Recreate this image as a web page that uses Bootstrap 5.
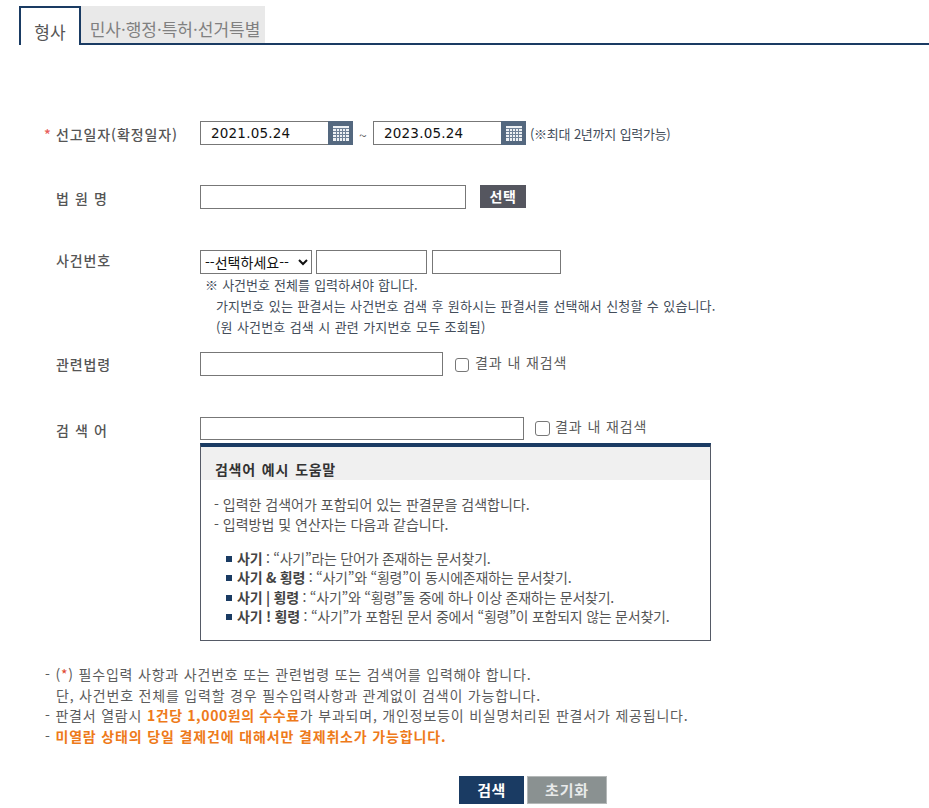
<!DOCTYPE html>
<html lang="ko">
<head>
<meta charset="utf-8">
<title>판결서 검색</title>
<link rel="stylesheet" href="https://cdn.jsdelivr.net/npm/bootstrap@5.3.0/dist/css/bootstrap.min.css">
<style>
html,body{height:808px;overflow:hidden}
body{font-family:"Noto Sans CJK KR","Liberation Sans",sans-serif;font-size:14px;color:#5c5c5c;background:#fff;line-height:20px}
.tabbar{margin-top:6px;padding-left:19px;height:39px;display:flex}
.tab-on{width:62px;height:39px;border:2px solid #1a3b63;border-bottom:0;background:#fff;font-size:17px;color:#555;padding-top:14px;text-align:center;line-height:20px}
.tab-off{width:184px;height:39px;background:#e9e9e9;border-bottom:2px solid #1a3b63;font-size:17px;color:#808080;text-align:center;padding:13px 0 0 4px;line-height:20px}
.tab-rest{flex:1;border-bottom:2px solid #1a3b63}
.form-zone{padding-left:44px}
.lbl{width:156px;flex:none;font-size:14px;font-weight:500;color:#555;padding-left:12px;position:relative;letter-spacing:.9px}
.lbl-top{padding-top:3px}
.lbl-sp{letter-spacing:1.6px;word-spacing:-1px}
.req{position:absolute;left:0;top:3px;color:#e8605a}
.fld{border:1px solid #777;background:#fff;height:24px;padding:0 10px;font-size:13.5px;color:#111;font-family:"DejaVu Sans",sans-serif;line-height:22px;letter-spacing:.2px}
.datebox{display:flex;height:24px}
.datebox .fld{width:128px;border-right:0}
.calbtn{width:25px;height:24px;background:#54687f;display:flex;align-items:center;justify-content:center}
.gbtn{width:46px;height:23px;margin-left:14px;background:#55565f;color:#fff;font-weight:700;font-size:14px;text-align:center;line-height:23px;letter-spacing:.6px}
.casesel{width:112px;height:24px;border:1px solid #777;background:#fff;font-size:14px;color:#111;padding:0;font-family:"Noto Sans CJK KR",sans-serif}
.hint{color:#434d5a;font-size:13px;word-spacing:.5px}
.hint-w{letter-spacing:.16px}
.hint-n{letter-spacing:-.3px;padding-top:3px}
.cbx{width:14px;height:14px;border:1px solid #777;border-radius:3px;background:#fff;flex:none;display:inline-block}
.cbx-lg{width:15px;height:15px}
.chk-txt{letter-spacing:.9px;margin-bottom:2px}
.help{width:511px;height:198px;border:1px solid #555a66;border-top:4px solid #1a3b63}
.help-h{height:33px;background:#f0f0f0;font-weight:700;font-size:14px;color:#333;padding:12px 0 0 14px;line-height:20px;letter-spacing:.7px;word-spacing:1.5px}
.help-b{padding:14px 13px;font-size:14px;line-height:20px;color:#555}
.gap-line{margin-top:15px}
.bl{padding-left:11px;position:relative;margin-left:12px;line-height:19.3px;letter-spacing:-.24px}
.bl::before{content:"";position:absolute;left:0;top:7px;width:6px;height:6px;background:#1a3b63}
.bl b{color:#444}
.notes{margin-top:23px;padding-left:45px;font-size:14px;line-height:20.5px;color:#5c5c5c;letter-spacing:.8px}
.indent{padding-left:11px}
.o1{color:#ee7a1a;font-weight:700;letter-spacing:.85px}
.o1-t{letter-spacing:.6px}
.o2{color:#e0452c}
.btn-go,.btn-reset{display:flex;align-items:center;justify-content:center;color:#fff;font-weight:700;font-size:15px;height:28px;letter-spacing:.5px}
.btn-go{width:65px;background:#1a3b63;margin-right:3px}
.btn-reset{width:80px;background:#8a9191;border:1px solid #b4b8b8;color:#e8eaea;letter-spacing:.9px}
</style>
</head>
<body>
<div class="tabbar">
  <div class="tab-on">형사</div>
  <div class="tab-off">민사·행정·특허·선거특별</div>
  <div class="tab-rest"></div>
</div>

<form class="form-zone" onsubmit="return false">
  <div class="d-flex" style="margin-top:76px;height:24px;">
    <div class="lbl lbl-top"><span class="req">*</span>선고일자(확정일자)</div>
    <div class="datebox">
      <div class="fld">2021.05.24</div>
      <div class="calbtn"><svg width="16" height="15" viewBox="0 0 16 15"><rect width="16" height="15" fill="#eef1f4"/><path d="M0 2.5H16M0 5.5H16M0 8.5H16M0 11.5H16M3.5 2V15M6.5 2V15M9.5 2V15M12.5 2V15" stroke="#6f8197" stroke-width="1"/></svg></div>
    </div>
    <span class="align-self-end text-center" style="width:20px;line-height:20px">~</span>
    <div class="datebox">
      <div class="fld">2023.05.24</div>
      <div class="calbtn"><svg width="16" height="15" viewBox="0 0 16 15"><rect width="16" height="15" fill="#eef1f4"/><path d="M0 2.5H16M0 5.5H16M0 8.5H16M0 11.5H16M3.5 2V15M6.5 2V15M9.5 2V15M12.5 2V15" stroke="#6f8197" stroke-width="1"/></svg></div>
    </div>
    <span class="hint hint-n ms-1">(※최대 2년까지 입력가능)</span>
  </div>

  <div class="d-flex" style="margin-top:40px;height:24px">
    <div class="lbl lbl-sp lbl-top">법 원 명</div>
    <div class="fld" style="width:266px"></div>
    <div class="gbtn">선택</div>
  </div>

  <div class="d-flex" style="margin-top:41px">
    <div class="lbl">사건번호</div>
    <div>
      <div class="d-flex">
        <select class="casesel"><option>--선택하세요--</option></select>
        <div class="fld" style="width:111px;margin-left:4px"></div>
        <div class="fld" style="width:129px;margin-left:5px"></div>
      </div>
      <div class="hint" style="margin-top:1px;padding-left:5px;">※ 사건번호 전체를 입력하셔야 합니다.</div>
      <div class="hint hint-w" style="padding-left:16px;line-height:21px">가지번호 있는 판결서는 사건번호 검색 후 원하시는 판결서를 선택해서 신청할 수 있습니다.</div>
      <div class="hint hint-w" style="padding-left:16px;line-height:21px">(원 사건번호 검색 시 관련 가지번호 모두 조회됨)</div>
    </div>
  </div>

  <div class="d-flex" style="margin-top:15px;height:24px">
    <div class="lbl" style="padding-top:2px">관련법령</div>
    <div class="fld" style="width:243px"></div>
    <div class="d-flex align-items-center" style="margin-left:12px;gap:6px;margin-top:-3px">
      <span class="cbx" style="margin-top:4px"></span><span class="chk-txt">결과 내 재검색</span>
    </div>
  </div>

  <div class="d-flex" style="margin-top:41px">
    <div class="lbl lbl-sp lbl-top">검 색 어</div>
    <div>
      <div class="d-flex" style="height:23px">
        <div class="fld" style="width:324px;height:23px"></div>
        <div class="d-flex align-items-center" style="margin-left:11px;gap:5px;margin-top:-3px">
          <span class="cbx cbx-lg" style="margin-top:3px"></span><span class="chk-txt">결과 내 재검색</span>
        </div>
      </div>
      <div class="help" style="margin-top:3px">
        <div class="help-h">검색어 예시 도움말</div>
        <div class="help-b">
          <div>- 입력한 검색어가 포함되어 있는 판결문을 검색합니다.</div>
          <div>- 입력방법 및 연산자는 다음과 같습니다.</div>
          <div class="bl gap-line"><b>사기</b> : “사기”라는 단어가 존재하는 문서찾기.</div>
          <div class="bl"><b>사기 &amp; 횡령</b> : “사기”와 “횡령”이 동시에존재하는 문서찾기.</div>
          <div class="bl"><b>사기 | 횡령</b> : “사기”와 “횡령”둘 중에 하나 이상 존재하는 문서찾기.</div>
          <div class="bl"><b>사기 ! 횡령</b> : “사기”가 포함된 문서 중에서 “횡령”이 포함되지 않는 문서찾기.</div>
        </div>
      </div>
    </div>
  </div>
</form>

<div class="notes">
  <div>- (<span class="o2">*</span>) 필수입력 사항과 사건번호 또는 관련법령 또는 검색어를 입력해야 합니다.</div>
  <div class="indent">단, 사건번호 전체를 입력할 경우 필수입력사항과 관계없이 검색이 가능합니다.</div>
  <div>- 판결서 열람시 <span class="o1 o1-t">1건당 1,000원의 수수료</span>가 부과되며, 개인정보등이 비실명처리된 판결서가 제공됩니다.</div>
  <div>- <span class="o1">미열람 상태의 당일 결제건에 대해서만 결제취소가 가능합니다.</span></div>
</div>

<div class="d-flex" style="margin-top:30px;padding-left:459px">
  <div class="btn-go">검색</div>
  <div class="btn-reset">초기화</div>
</div>
<script src="https://cdn.jsdelivr.net/npm/bootstrap@5.3.0/dist/js/bootstrap.bundle.min.js"></script>
</body>
</html>
